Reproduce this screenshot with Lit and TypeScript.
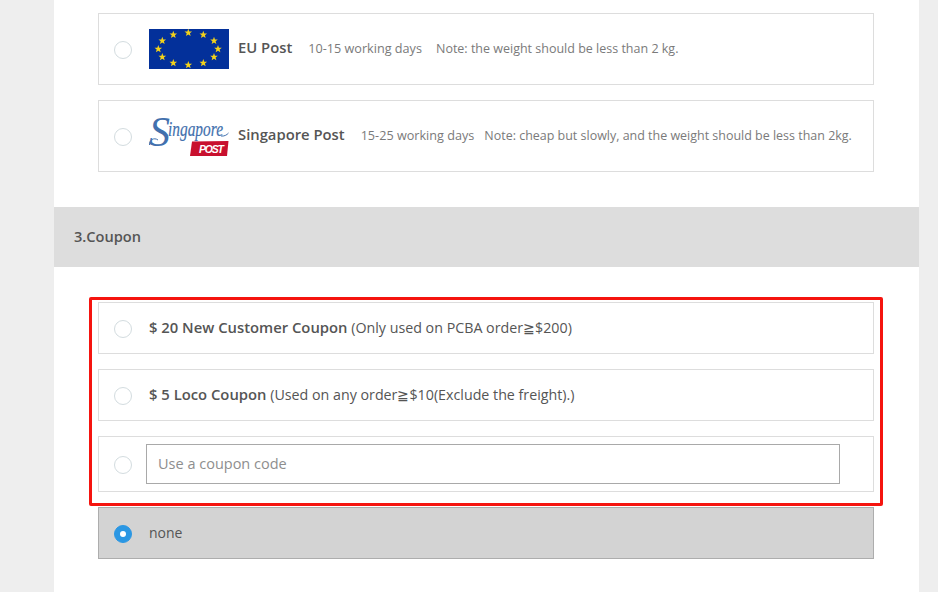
import { LitElement, html, css, svg } from "lit";
import { customElement } from "lit/decorators.js";

const starPath = (cx: number, cy: number, r: number) => {
  const pts: string[] = [];
  for (let i = 0; i < 10; i++) {
    const a = -Math.PI / 2 + (i * Math.PI) / 5;
    const rr = i % 2 ? r * 0.42 : r;
    pts.push(`${(cx + rr * Math.cos(a)).toFixed(2)},${(cy + rr * Math.sin(a)).toFixed(2)}`);
  }
  return pts.join(" ");
};

const euStars: [number, number][] = [
  [39.3, 3.8], [54.3, 5.8], [65, 11.8], [69, 20], [65, 28], [54.3, 34], [39.3, 36],
  [24.3, 34], [13.3, 28], [9.3, 20], [13.3, 11.8], [24.3, 5.8],
];

const euFlag = html`<svg class="logo" viewBox="0 0 80 40" width="80" height="40">
  <rect width="80" height="40" fill="#03309a"></rect>
  ${euStars.map(([x, y]) => svg`<polygon points=${starPath(x, y, 4)} fill="#f3d21a"></polygon>`)}
</svg>`;

const sgLogo = html`<svg class="logo" viewBox="0 0 80 40" width="80" height="40">
  <path d="M72 20 C75 20.5 78 19 79.5 17" fill="none" stroke="#4270ad" stroke-width="1"></path>
  <path d="M0.5 29 C0 24 5 21 9 24" fill="none" stroke="#4270ad" stroke-width="1"></path>
  <text x="0" y="30" class="sg-cap">S</text>
  <text x="19" y="20" class="sg-script" textLength="55" lengthAdjust="spacingAndGlyphs">ingapore</text>
  <polygon points="43,25.5 79.5,25 78,40 41,40" fill="#c8102e"></polygon>
  <text x="50" y="37" class="sg-post" textLength="25">POST</text>
</svg>`;

const radio = (on = false) => html`<span class="radio ${on ? "on" : ""}"></span>`;

@customElement("app-root")
export class AppRoot extends LitElement {
  static styles = css`
    :host {
      display: block;
      width: 938px;
      height: 592px;
      overflow: hidden;
      background: #eeeeee;
      font-family: "Open Sans", "Noto Sans", sans-serif;
      color: #555;
    }
    .panel {
      margin-left: 54px;
      width: 865px;
      height: 592px;
      box-sizing: border-box;
      background: #fff;
      padding-top: 13px;
    }
    .list {
      display: flex;
      flex-direction: column;
      gap: 15px;
      margin-left: 44px;
      width: 776px;
    }
    .row {
      box-sizing: border-box;
      display: flex;
      align-items: center;
      height: 52px;
      padding-left: 15px;
      border: 1px solid #dddddd;
      background: #fff;
    }
    .row.tall { height: 72px; }
    .row.code { height: 56px; }
    .row.selected {
      background: #d3d3d3;
      border-color: #adadad;
    }
    .radio {
      box-sizing: border-box;
      flex: none;
      width: 18px;
      height: 18px;
      margin-top: 2px;
      border-radius: 50%;
      border: 1px solid #d3dcdf;
      background: #fff;
      display: flex;
      align-items: center;
      justify-content: center;
      margin-right: 17px;
    }
    .radio.on {
      background: #2b97e3;
      border-color: #2b97e3;
    }
    .radio.on::after {
      content: "";
      width: 6px;
      height: 6px;
      border-radius: 50%;
      background: #fff;
    }
    .logo {
      flex: none;
      display: block;
      margin-right: 9px;
      overflow: visible;
    }
    .sg-script {
      font-family: "Liberation Serif", serif;
      font-style: italic;
      font-size: 21px;
      fill: #4270ad;
      stroke: #4270ad;
      stroke-width: 0.2;
    }
    .sg-cap {
      font-family: "Liberation Serif", serif;
      font-style: italic;
      font-size: 42px;
      fill: #4270ad;
    }
    .sg-post {
      font-family: "Liberation Sans", sans-serif;
      font-style: italic;
      font-weight: 700;
      font-size: 10.5px;
      fill: #fff;
    }
    .carrier {
      font-size: 14.8px;
      font-weight: 600;
      color: #555;
      margin-top: -5px;
      margin-right: 16px;
      white-space: nowrap;
    }
    .sub {
      font-size: 12.5px;
      color: #7a7a7a;
      margin-top: -2px;
      margin-right: 14px;
      white-space: nowrap;
    }
    .sub.days { font-size: 12.65px; }
    .sub.days.sg { margin-right: 10px; }
    .sub.long { font-size: 12.47px; }
    .heading {
      box-sizing: border-box;
      height: 60px;
      margin-top: 35px;
      padding: 0 0 2px 20px;
      display: flex;
      align-items: center;
      background: #dddddd;
      font-size: 14.6px;
      font-weight: 600;
      color: #555;
    }
    .coupons {
      position: relative;
      margin-top: 35px;
    }
    .coupon {
      font-size: 14.25px;
      color: #555;
      white-space: nowrap;
      margin-top: -2px;
    }
    .coupon b { font-weight: 600; font-size: 14.82px; }
    .input {
      box-sizing: border-box;
      width: 694px;
      height: 40px;
      margin-left: -3px;
      padding: 0 11px 2px;
      border: 1px solid #a9a9a9;
      background: #fff;
      font: inherit;
      font-size: 14.5px;
      color: #555;
      outline: none;
    }
    .input::placeholder { color: #8e8e8e; opacity: 1; }
    .none { font-size: 14px; color: #555; margin-top: -2px; }
    .mark {
      position: absolute;
      left: 35px;
      top: -5px;
      box-sizing: border-box;
      width: 794px;
      height: 209px;
      border: 3px solid #f5140f;
      border-radius: 2px;
      pointer-events: none;
    }
  `;

  render() {
    return html`<div class="panel">
      <div class="list">
        <div class="row tall">
          ${radio()}${euFlag}
          <span class="carrier">EU Post</span>
          <span class="sub days">10-15 working days</span>
          <span class="sub">Note: the weight should be less than 2 kg.</span>
        </div>
        <div class="row tall">
          ${radio()}${sgLogo}
          <span class="carrier">Singapore Post</span>
          <span class="sub days sg">15-25 working days</span>
          <span class="sub long">Note: cheap but slowly, and the weight should be less than 2kg.</span>
        </div>
      </div>
      <div class="heading">3.Coupon</div>
      <div class="coupons">
        <div class="list">
          <div class="row">
            ${radio()}
            <span class="coupon"><b>$ 20 New Customer Coupon</b> (Only used on PCBA order≧$200)</span>
          </div>
          <div class="row">
            ${radio()}
            <span class="coupon"><b>$ 5 Loco Coupon</b> (Used on any order≧$10(Exclude the freight).)</span>
          </div>
          <div class="row code">
            ${radio()}
            <input class="input" placeholder="Use a coupon code" />
          </div>
          <div class="row selected">
            ${radio(true)}
            <span class="none">none</span>
          </div>
        </div>
        <div class="mark"></div>
      </div>
    </div>`;
  }
}
